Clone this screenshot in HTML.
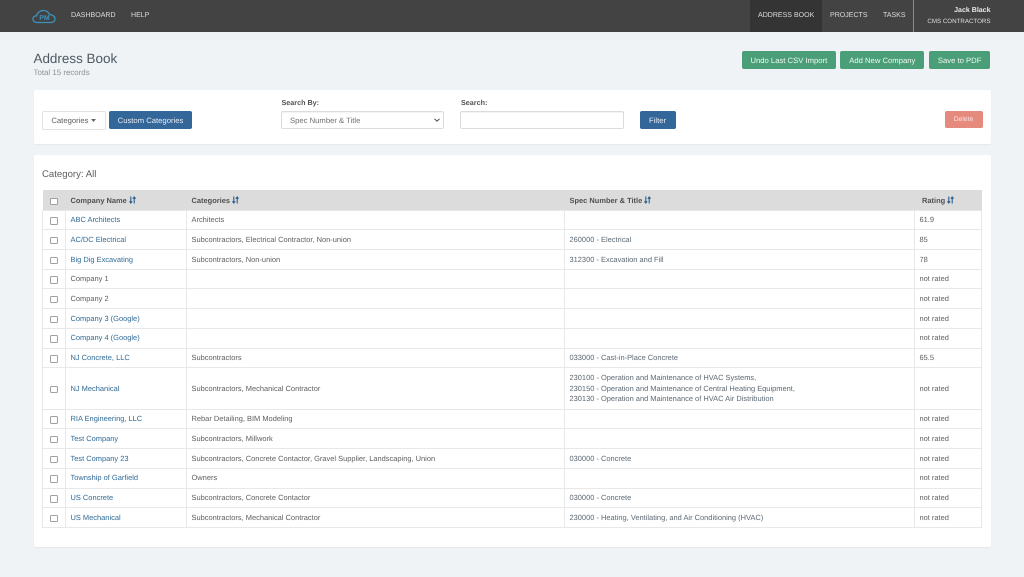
<!DOCTYPE html>
<html><head><meta charset="utf-8"><title>Address Book</title>
<style>
*{box-sizing:border-box}
html,body{margin:0;padding:0}
html{background:#eff3f5}
body{width:1024px;height:577px;overflow:hidden;background:#eff3f5;font-family:"Liberation Sans",sans-serif;position:relative;color:#666;text-rendering:geometricPrecision;filter:blur(.3px)}
.a{position:absolute;white-space:nowrap}
.nav{left:0;top:0;width:1024px;height:32px;background:#434343}
.n{color:#dedede;font-size:7.04px;line-height:10px;top:11px}
.btn{border-radius:2px;text-align:center;color:#f0f7f3;font-size:7.68px;background:#4a9f78;height:18.7px;line-height:19px;top:50.5px}
.card{background:#fff;border-radius:2px;box-shadow:0 1px 1px #e4e8ea}
.lab{font-weight:bold;font-size:7.2px;color:#555;line-height:10px;top:98px}
.inp{border:1px solid #dcdcdc;border-radius:2px;height:18px;top:111px;background:#fff;box-shadow:inset 0 1px 1px #f2f2f2}
table{position:absolute;left:42px;top:190px;width:939px;border-collapse:collapse;table-layout:fixed;font-size:7.46px;color:#5e5e5e}
th{background:#dcdcdc;height:20px;text-align:left;padding:1px 5px 0;font-size:7.46px;color:#505050;font-weight:bold}
td{border:1px solid #e8e8e8;height:19.73px;padding:1px 4.5px 0;line-height:10.4px;white-space:nowrap;overflow:hidden}
td:first-child,th:first-child{padding:0;text-align:center}
th svg{vertical-align:-1px}
b.c{display:block;width:7.5px;height:7.5px;border:1px solid #a0a0a0;border-radius:1.5px;background:#fff;margin:0 auto;position:relative;top:1px}
td a{color:#306a96}
td.s{color:#5c6872}
</style></head><body>
<div class="a nav"></div>
<svg class="a" style="left:32px;top:9px" width="24" height="15" viewBox="0 0 24 15"><path d="M5 13.5C2.500 13.500 1 12 1 10 1 8 2.500 6.800 4.500 6.800 5 4 8 1.500 11.500 1.500 14.500 1.500 16.800 3.300 17.500 5.500 20.500 5.500 23 7.500 23 10 23 12 21.500 13.500 19 13.500Z" fill="none" stroke="#3d93bb" stroke-width="1.3"/><text x="12.500" y="11" text-anchor="middle" font-family="Liberation Sans" font-size="7" font-weight="bold" fill="#3d93bb">PM</text></svg>
<div class="a n" style="left:71px">DASHBOARD</div>
<div class="a n" style="left:131px">HELP</div>
<div class="a" style="left:750px;top:0;width:72px;height:32px;background:#343434"></div>
<div class="a n" style="left:758px">ADDRESS BOOK</div>
<div class="a n" style="left:830px">PROJECTS</div>
<div class="a n" style="left:883px">TASKS</div>
<div class="a" style="left:913px;top:0;width:1px;height:32px;background:#8a8a8a"></div>
<div class="a" style="right:33.500px;top:6px;font-size:7.040px;font-weight:bold;line-height:10px;color:#e8e8e8">Jack Black</div>
<div class="a" style="right:33.500px;top:17px;font-size:6.200px;line-height:10px;color:#dedede">CMS CONTRACTORS</div>

<div class="a" style="left:33.500px;top:50.500px;font-size:13.440px;line-height:16px;color:#4d5964">Address Book</div>
<div class="a" style="left:33.500px;top:68px;font-size:7.900px;line-height:10px;color:#909090">Total 15 records</div>
<div class="a btn" style="left:742px;width:93.700px">Undo Last CSV Import</div>
<div class="a btn" style="left:840.300px;width:84px">Add New Company</div>
<div class="a btn" style="left:929px;width:61.300px">Save to PDF</div>

<div class="a card" style="left:33.500px;top:90px;width:957px;height:54px"></div>
<div class="a" style="left:41.500px;top:110.500px;width:64px;height:19px;background:#fff;border:1px solid #e2e2e2;border-radius:2px;text-align:center;font-size:7.680px;line-height:17px;color:#5e5e5e">Categories <svg width="5" height="3" viewBox="0 0 5 3" style="vertical-align:1px"><path d="M0 0H5L2.500 3Z" fill="#666"/></svg></div>
<div class="a" style="left:109px;top:111px;width:83px;height:18px;background:#336699;border-radius:2px;text-align:center;font-size:7.680px;line-height:19px;color:#e8eef4">Custom Categories</div>
<div class="a lab" style="left:281.500px">Search By:</div>
<div class="a inp" style="left:281px;width:163px;font-size:7.680px;line-height:17px;padding-left:8px;color:#707070">Spec Number &amp; Title<svg style="position:absolute;right:3px;top:6px" width="6" height="4" viewBox="0 0 6 4"><path d="M.5.8 3 3.200 5.500.8" fill="none" stroke="#444" stroke-width="1"/></svg></div>
<div class="a lab" style="left:461px">Search:</div>
<div class="a inp" style="left:460px;width:163.500px"></div>
<div class="a" style="left:639.500px;top:110.500px;width:36px;height:18.500px;background:#336699;border-radius:2px;text-align:center;font-size:7.680px;line-height:19px;color:#e8eef4">Filter</div>
<div class="a" style="left:944.500px;top:110.500px;width:38px;height:17.500px;background:#e68a7e;border-radius:2px;text-align:center;font-size:6.720px;line-height:18.500px;color:#f9e4e0">Delete</div>

<div class="a card" style="left:33.500px;top:155px;width:957px;height:392px"></div>
<div class="a" style="left:42px;top:168.500px;font-size:9.600px;line-height:12px;color:#5e5e5e">Category: All</div>

<table>
<colgroup><col style="width:23px"><col style="width:121px"><col style="width:378px"><col style="width:350px"><col style="width:67px"></colgroup>
<tr><th><b class="c" style="top:1.500px"></b></th><th>Company Name <svg width="7" height="8" viewBox="0 0 7 8"><path d="M1.800.5V7M.4 5.300 1.800 7 3.200 5.300M5.200 7.500V1M3.800 2.700 5.200 1 6.600 2.700" fill="none" stroke="#2a5d8c" stroke-width="1.100"/></svg></th><th>Categories <svg width="7" height="8" viewBox="0 0 7 8"><path d="M1.800.5V7M.4 5.300 1.800 7 3.200 5.300M5.200 7.500V1M3.800 2.700 5.200 1 6.600 2.700" fill="none" stroke="#2a5d8c" stroke-width="1.100"/></svg></th><th>Spec Number &amp; Title <svg width="7" height="8" viewBox="0 0 7 8"><path d="M1.800.5V7M.4 5.300 1.800 7 3.200 5.300M5.200 7.500V1M3.800 2.700 5.200 1 6.600 2.700" fill="none" stroke="#2a5d8c" stroke-width="1.100"/></svg></th><th style="padding-left:7.500px">Rating <svg width="7" height="8" viewBox="0 0 7 8"><path d="M1.800.5V7M.4 5.300 1.800 7 3.200 5.300M5.200 7.500V1M3.800 2.700 5.200 1 6.600 2.700" fill="none" stroke="#2a5d8c" stroke-width="1.100"/></svg></th></tr>
<tr><td><b class="c"></b></td><td><a>ABC Architects</a></td><td>Architects</td><td class="s"></td><td>61.9</td></tr>
<tr><td><b class="c"></b></td><td><a>AC/DC Electrical</a></td><td>Subcontractors, Electrical Contractor, Non-union</td><td class="s">260000 - Electrical</td><td>85</td></tr>
<tr><td><b class="c"></b></td><td><a>Big Dig Excavating</a></td><td>Subcontractors, Non-union</td><td class="s">312300 - Excavation and Fill</td><td>78</td></tr>
<tr><td><b class="c"></b></td><td>Company 1</td><td></td><td></td><td>not rated</td></tr>
<tr><td><b class="c"></b></td><td>Company 2</td><td></td><td></td><td>not rated</td></tr>
<tr><td><b class="c"></b></td><td><a>Company 3 (Google)</a></td><td></td><td></td><td>not rated</td></tr>
<tr><td><b class="c"></b></td><td><a>Company 4 (Google)</a></td><td></td><td></td><td>not rated</td></tr>
<tr><td><b class="c"></b></td><td><a>NJ Concrete, LLC</a></td><td>Subcontractors</td><td class="s">033000 - Cast-in-Place Concrete</td><td>65.5</td></tr>
<tr><td style="height:41.400px"><b class="c"></b></td><td><a>NJ Mechanical</a></td><td>Subcontractors, Mechanical Contractor</td><td class="s">230100 - Operation and Maintenance of HVAC Systems,<br>230150 - Operation and Maintenance of Central Heating Equipment,<br>230130 - Operation and Maintenance of HVAC Air Distribution</td><td>not rated</td></tr>
<tr><td><b class="c"></b></td><td><a>RIA Engineering, LLC</a></td><td>Rebar Detailing, BIM Modeling</td><td></td><td>not rated</td></tr>
<tr><td><b class="c"></b></td><td><a>Test Company</a></td><td>Subcontractors, Millwork</td><td></td><td>not rated</td></tr>
<tr><td><b class="c"></b></td><td><a>Test Company 23</a></td><td>Subcontractors, Concrete Contactor, Gravel Supplier, Landscaping, Union</td><td class="s">030000 - Concrete</td><td>not rated</td></tr>
<tr><td><b class="c"></b></td><td><a>Township of Garfield</a></td><td>Owners</td><td></td><td>not rated</td></tr>
<tr><td><b class="c"></b></td><td><a>US Concrete</a></td><td>Subcontractors, Concrete Contactor</td><td class="s">030000 - Concrete</td><td>not rated</td></tr>
<tr><td><b class="c"></b></td><td><a>US Mechanical</a></td><td>Subcontractors, Mechanical Contractor</td><td class="s">230000 - Heating, Ventilating, and Air Conditioning (HVAC)</td><td>not rated</td></tr>
</table>
</body></html>
